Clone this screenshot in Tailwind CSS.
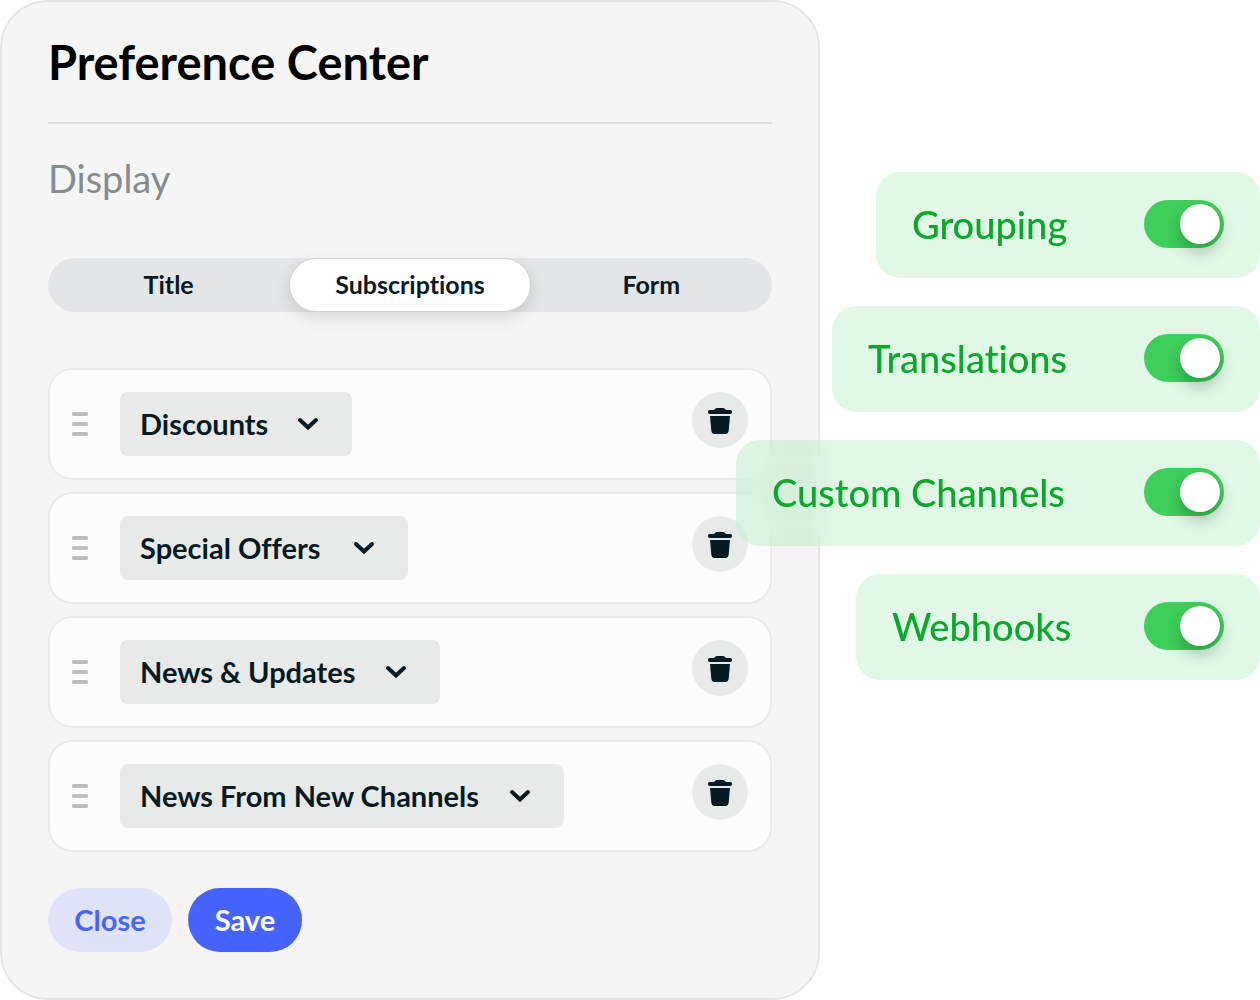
<!DOCTYPE html>
<html lang="en">
<head>
  <meta charset="UTF-8" />
  <meta name="viewport" content="width=device-width, initial-scale=1.0" />
  <title>Preference Center</title>
  <script src="https://cdn.jsdelivr.net/npm/@tailwindcss/browser@4"></script>
</head>
<body class="bg-white font-['Lato',sans-serif] text-[#061a23] [font-variant-ligatures:none]">

  <!-- Shared icons -->
  <svg class="hidden">
    <symbol id="handle" viewBox="0 0 16 24">
      <rect width="16" height="4" rx="1.5" /><rect y="10" width="16" height="4" rx="1.5" /><rect y="20" width="16" height="4" rx="1.5" />
    </symbol>
    <symbol id="chevron" viewBox="0 0 24 24">
      <path d="M4 8l8 7.500 8-7.500" fill="none" stroke="currentColor" stroke-width="4" stroke-linecap="round" stroke-linejoin="miter" />
    </symbol>
    <symbol id="trash" viewBox="0 0 24 26">
      <path d="M1.600 2H5.500C7 2 7 0 9 0h6c2 0 2 2 3.500 2h3.900C23.400 2 24 2.800 24 4s-.6 2-1.600 2H1.600C.6 6 0 5.200 0 4s.6-2 1.600-2z" />
      <path d="M2 8h20l-1.300 14.500C20.500 24.800 19.400 26 17.400 26H6.600c-2 0-3.100-1.200-3.300-3.500z" />
    </symbol>
  </svg>

  <main class="flex items-start">
    <section class="min-w-0 flex-1 rounded-[48px] border-2 border-[#e4e5e6] bg-[#f5f5f5] px-[46px] pt-8 pb-[46px]">
      <h1 class="border-b-2 border-[#dadbdb] pb-8 text-[47px] leading-14 font-bold text-black">Preference Center</h1>
      <h2 class="mt-[30px] text-[38px] leading-12 text-[#868b8e]">Display</h2>

      <!-- Tabs -->
      <div role="tablist" class="mt-14 grid h-[54px] grid-cols-3 rounded-full bg-[#e3e5e6] text-[25px] font-bold">
        <button type="button" role="tab" class="rounded-full">Title</button>
        <button type="button" role="tab" aria-selected="true" class="rounded-full border border-[#cfd1d2] bg-white shadow-[0_6px_16px_rgba(0,0,0,0.12)]">Subscriptions</button>
        <button type="button" role="tab" class="rounded-full">Form</button>
      </div>

      <!-- Subscriptions -->
      <ul class="mt-14 flex flex-col gap-3 text-[29px] font-bold">
        <li class="flex items-start rounded-3xl border-2 border-[#e9eaea] bg-[#fcfcfc] p-[22px]">
          <svg class="mt-5 mr-8 h-6 w-4 fill-[#bbbdbe]"><use href="#handle" /></svg>
          <div class="relative">
            <select aria-label="Subscription 1" class="h-16 w-58 appearance-none rounded-lg bg-[#e8eaea] pl-5">
              <option>Discounts</option>
            </select>
            <svg class="pointer-events-none absolute top-5 right-8 size-6"><use href="#chevron" /></svg>
          </div>
          <button type="button" aria-label="Delete Discounts" class="ml-auto flex size-14 items-center justify-center rounded-full bg-[#e8eaea]">
            <svg class="mt-0.5 h-[26px] w-6 fill-[#061a23]"><use href="#trash" /></svg>
          </button>
        </li>
        <li class="flex items-start rounded-3xl border-2 border-[#e9eaea] bg-[#fcfcfc] p-[22px]">
          <svg class="mt-5 mr-8 h-6 w-4 fill-[#bbbdbe]"><use href="#handle" /></svg>
          <div class="relative">
            <select aria-label="Subscription 2" class="h-16 w-72 appearance-none rounded-lg bg-[#e8eaea] pl-5">
              <option>Special Offers</option>
            </select>
            <svg class="pointer-events-none absolute top-5 right-8 size-6"><use href="#chevron" /></svg>
          </div>
          <button type="button" aria-label="Delete Special Offers" class="ml-auto flex size-14 items-center justify-center rounded-full bg-[#e8eaea]">
            <svg class="mt-0.5 h-[26px] w-6 fill-[#061a23]"><use href="#trash" /></svg>
          </button>
        </li>
        <li class="flex items-start rounded-3xl border-2 border-[#e9eaea] bg-[#fcfcfc] p-[22px]">
          <svg class="mt-5 mr-8 h-6 w-4 fill-[#bbbdbe]"><use href="#handle" /></svg>
          <div class="relative">
            <select aria-label="Subscription 3" class="h-16 w-80 appearance-none rounded-lg bg-[#e8eaea] pl-5">
              <option>News &amp; Updates</option>
            </select>
            <svg class="pointer-events-none absolute top-5 right-8 size-6"><use href="#chevron" /></svg>
          </div>
          <button type="button" aria-label="Delete News &amp; Updates" class="ml-auto flex size-14 items-center justify-center rounded-full bg-[#e8eaea]">
            <svg class="mt-0.5 h-[26px] w-6 fill-[#061a23]"><use href="#trash" /></svg>
          </button>
        </li>
        <li class="flex items-start rounded-3xl border-2 border-[#e9eaea] bg-[#fcfcfc] p-[22px]">
          <svg class="mt-5 mr-8 h-6 w-4 fill-[#bbbdbe]"><use href="#handle" /></svg>
          <div class="relative">
            <select aria-label="Subscription 4" class="h-16 w-111 appearance-none rounded-lg bg-[#e8eaea] pl-5">
              <option>News From New Channels</option>
            </select>
            <svg class="pointer-events-none absolute top-5 right-8 size-6"><use href="#chevron" /></svg>
          </div>
          <button type="button" aria-label="Delete News From New Channels" class="ml-auto flex size-14 items-center justify-center rounded-full bg-[#e8eaea]">
            <svg class="mt-0.5 h-[26px] w-6 fill-[#061a23]"><use href="#trash" /></svg>
          </button>
        </li>
      </ul>

      <div class="mt-9 flex gap-4 text-[29px] font-bold">
        <button type="button" class="h-16 w-31 rounded-full bg-[#e0e3f8] text-[#4865fb]">Close</button>
        <button type="button" class="h-16 w-[114px] rounded-full bg-[#4564ff] text-white">Save</button>
      </div>
    </section>

    <!-- Feature toggles, the widest one overlaps the panel -->
    <aside class="z-10 mt-43 -ml-21 flex w-131 shrink-0 flex-col items-end gap-7 text-[38px] leading-12 font-medium text-[#08a82a]">
      <label class="flex w-96 items-center justify-between rounded-3xl bg-[#3ccf5b]/15 px-9 pt-7 pb-[30px] backdrop-blur-md">
        Grouping
        <input type="checkbox" checked class="h-12 w-20 appearance-none rounded-full bg-[#3ecf5a] p-1 before:ml-auto before:block before:size-10 before:rounded-full before:bg-white before:shadow-[0_8px_16px_rgba(0,0,0,0.25)]" />
      </label>
      <label class="flex w-107 items-center justify-between rounded-3xl bg-[#3ccf5b]/15 px-9 pt-7 pb-[30px] backdrop-blur-md">
        Translations
        <input type="checkbox" checked class="h-12 w-20 appearance-none rounded-full bg-[#3ecf5a] p-1 before:ml-auto before:block before:size-10 before:rounded-full before:bg-white before:shadow-[0_8px_16px_rgba(0,0,0,0.25)]" />
      </label>
      <label class="flex w-131 items-center justify-between rounded-3xl bg-[#3ccf5b]/15 px-9 pt-7 pb-[30px] backdrop-blur-md">
        Custom Channels
        <input type="checkbox" checked class="h-12 w-20 appearance-none rounded-full bg-[#3ecf5a] p-1 before:ml-auto before:block before:size-10 before:rounded-full before:bg-white before:shadow-[0_8px_16px_rgba(0,0,0,0.25)]" />
      </label>
      <label class="flex w-101 items-center justify-between rounded-3xl bg-[#3ccf5b]/15 px-9 pt-7 pb-[30px] backdrop-blur-md">
        Webhooks
        <input type="checkbox" checked class="h-12 w-20 appearance-none rounded-full bg-[#3ecf5a] p-1 before:ml-auto before:block before:size-10 before:rounded-full before:bg-white before:shadow-[0_8px_16px_rgba(0,0,0,0.25)]" />
      </label>
    </aside>
  </main>
</body>
</html>
